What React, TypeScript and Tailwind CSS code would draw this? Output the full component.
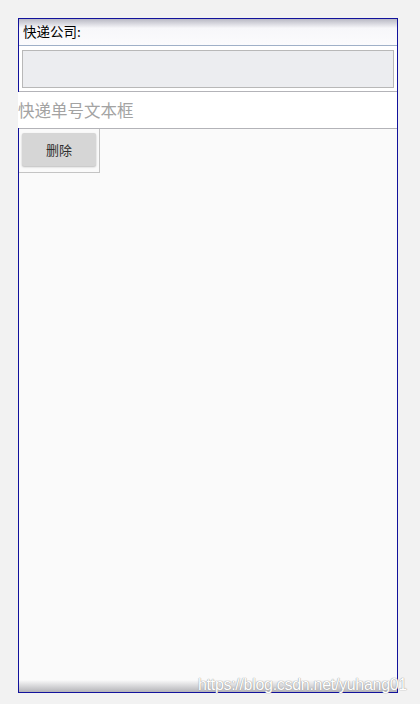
const cjk = { fontFamily: '"Noto Sans CJK SC", "Noto Sans", sans-serif' }

// Phone-style form: a company label, an empty picker field, a tracking-number box
// and a delete button, framed in a thin blue border on a light gray page.
export default function App() {
  return (
    <div className="relative h-[704px] w-[420px] bg-[#f2f2f2] pt-[18px] pl-[18px]" style={cjk}>
      <div className="relative flex h-[675px] w-[380px] flex-col border border-[#12129c] bg-[#fafafa]">
        <div className="flex h-[26px] items-center bg-gradient-to-b from-[#b9b9c4] via-[#f7f7fa] via-35% to-[#fbfbfd] pl-[4px] text-[13.5px] leading-none text-black">
          快递公司:
        </div>
        <div className="h-px bg-[#9fb0c8]" />
        <div className="flex h-[45px] items-center bg-white px-[3px]">
          <div className="h-[38px] w-full border border-[#b8b8b8] bg-[#ecedf0]" />
        </div>
        <div className="h-px bg-[#b3b3b8]" />
        <div className="-ml-px flex h-[36px] items-center bg-white text-[16.5px] leading-none text-[#a3a3a3]">
          快递单号文本框
        </div>
        <div className="h-px bg-[#b3b3b8]" />
        <div className="flex h-[44px] w-[81px] items-start border-r border-b border-[#c4c4c4] pt-[4px] pl-[3px]">
          <button className="flex h-[33px] w-[74px] items-center justify-center rounded-[2px] bg-[#d6d6d6] text-[13px] leading-none text-[#2e2e2e] shadow-[0_1px_2px_rgba(0,0,0,0.25)]">
            删除
          </button>
        </div>
        <div className="flex-1" />
        <div className="h-[12px] bg-gradient-to-b from-transparent to-[#b4b4b8]" />
      </div>
      <div
        className="absolute top-[677px] left-[198px] text-[16px] leading-none tracking-[-0.3px] text-white [text-shadow:0_0_1px_#9a9a9a,0_0_1px_#9a9a9a]"
        style={{ fontFamily: '"Liberation Sans", Arial, sans-serif' }}
      >
        https://blog.csdn.net/yuhang01
      </div>
    </div>
  )
}
